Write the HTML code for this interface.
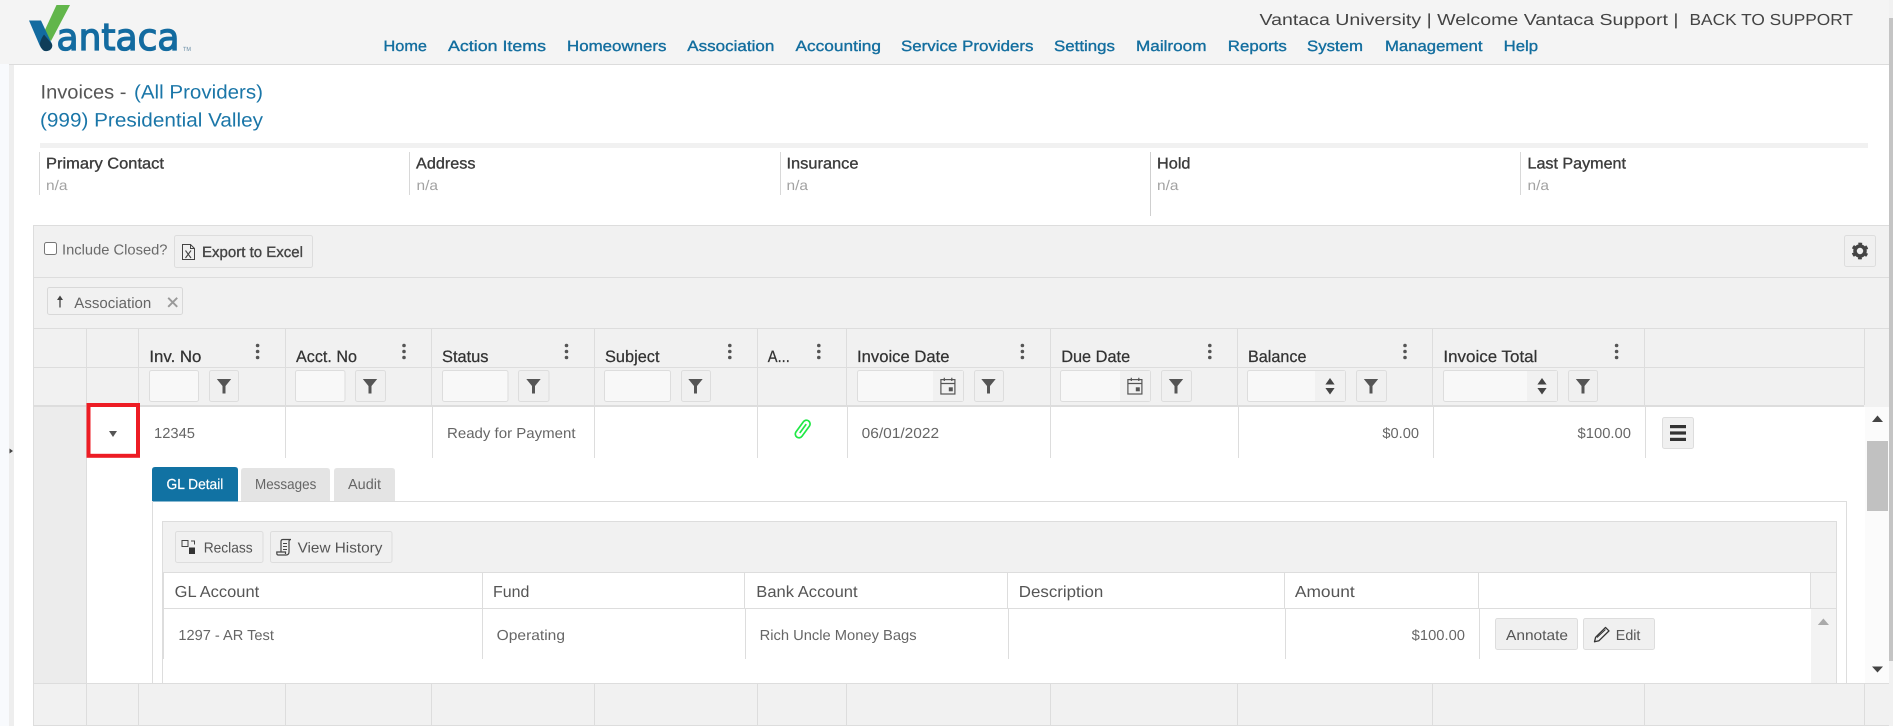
<!DOCTYPE html>
<html lang="en"><head><meta charset="utf-8"><title>Invoices</title>
<style>
html,body{margin:0;padding:0;background:#fff;overflow:hidden;width:1893px;height:726px}
svg{display:block}
text{font-family:"Liberation Sans",sans-serif;font-size:15px;fill:#666;text-rendering:geometricPrecision;white-space:pre}
.nav{font-size:15px;fill:#136e9f;stroke:#136e9f;stroke-width:.35px}
.top{font-size:16px;fill:#444}
.title{font-size:19.5px;fill:#555}
.link{font-size:19.5px;fill:#1a76a8}
.lab{font-size:15.5px;fill:#3c3c3c;stroke:#3c3c3c;stroke-width:.35px}
.na{font-size:14px;fill:#a2a2a2}
.th{font-size:16.5px;fill:#333;stroke:#333;stroke-width:.25px}
.td{font-size:14.5px;fill:#666}
.sh{font-size:16px;fill:#555}
.b{font-size:14.5px;fill:#555}
.l rect{fill:#ddd}
.btn{fill:#f0f0f0;stroke:#ddd;stroke-width:1}
.inp{fill:#f8f8f8;stroke:#ddd;stroke-width:1}
</style></head>
<body>
<svg xmlns="http://www.w3.org/2000/svg" width="1893" height="726" viewBox="0 0 1893 726">
<defs>
<g id="k" fill="#555"><circle cx="0" cy="345.5" r="1.8"/><circle cx="0" cy="351.5" r="1.8"/><circle cx="0" cy="357.5" r="1.8"/></g>
<path id="f" d="M-7.2 379H7.2L1.5 386V393.5H-1.5V386Z" fill="#555"/>
<g id="c" fill="none" stroke="#555" stroke-width="1.2"><rect x="0.6" y="379.6" width="14" height="14.4"/><path d="M0.6 383.5H14.6M4 377.8V381M11.5 377.8V381"/><rect x="8.5" y="387.3" width="4" height="4" fill="#555" stroke="none"/></g>
<path id="s" d="M0 378L4.600 384.500H-4.600ZM0 394.500L4.600 388H-4.600Z" fill="#444"/>
</defs>

<!-- page -->
<rect width="1893" height="726" fill="#fff"/>
<rect x="0" y="0" width="1889" height="64" fill="#f4f4f4"/>
<rect x="0" y="64" width="9" height="662" fill="#f8fafd"/>
<rect x="9" y="64" width="5" height="662" fill="#eeeeee"/>
<rect x="9" y="64" width="1880" height="1" fill="#dcdcdc"/>
<rect x="1889" y="0" width="4" height="726" fill="#f1f1f1"/>
<rect x="1889" y="18" width="4" height="643" fill="#c4c4c4"/>

<!-- logo -->
<path d="M56.500 5H70L51 41L44 32Z" fill="#62b64b"/>
<path d="M29 20.500H41L52 44Q53 48 49.500 50.300Q45 52.300 42.500 49.500Q40.500 47.500 39.500 45Z" fill="#136ba0"/>
<path d="M44 34.500L52 44Q53 48 49.500 50.300Q45 52.300 42.500 49.500Q39.500 46 40 43Q41 38.500 44 34.500Z" fill="#0f3d59"/>
<text x="56.500" y="50" textLength="123" lengthAdjust="spacingAndGlyphs" style="font-family:'DejaVu Sans',sans-serif;font-size:37px;fill:#136ba0;stroke:#136ba0;stroke-width:1.3px">antaca</text>
<text x="183" y="51" textLength="8" lengthAdjust="spacingAndGlyphs" style="font-size:6px;fill:#6a8ea6">TM</text>

<!-- top right -->
<text class="top" x="1259.500" y="25" textLength="419" lengthAdjust="spacingAndGlyphs">Vantaca University | Welcome Vantaca Support |</text>
<text class="top" x="1689.500" y="25" textLength="163.500" lengthAdjust="spacingAndGlyphs">BACK TO SUPPORT</text>

<!-- nav -->
<text class="nav" x="383.500" y="51" textLength="43.500" lengthAdjust="spacingAndGlyphs">Home</text>
<text class="nav" x="448" y="51" textLength="98" lengthAdjust="spacingAndGlyphs">Action Items</text>
<text class="nav" x="567" y="51" textLength="99.500" lengthAdjust="spacingAndGlyphs">Homeowners</text>
<text class="nav" x="687.300" y="51" textLength="87" lengthAdjust="spacingAndGlyphs">Association</text>
<text class="nav" x="795.500" y="51" textLength="85.500" lengthAdjust="spacingAndGlyphs">Accounting</text>
<text class="nav" x="901" y="51" textLength="132.500" lengthAdjust="spacingAndGlyphs">Service Providers</text>
<text class="nav" x="1054" y="51" textLength="61" lengthAdjust="spacingAndGlyphs">Settings</text>
<text class="nav" x="1136" y="51" textLength="70.500" lengthAdjust="spacingAndGlyphs">Mailroom</text>
<text class="nav" x="1227.800" y="51" textLength="59" lengthAdjust="spacingAndGlyphs">Reports</text>
<text class="nav" x="1307" y="51" textLength="56" lengthAdjust="spacingAndGlyphs">System</text>
<text class="nav" x="1385" y="51" textLength="97.500" lengthAdjust="spacingAndGlyphs">Management</text>
<text class="nav" x="1503.600" y="51" textLength="34.500" lengthAdjust="spacingAndGlyphs">Help</text>

<!-- title -->
<text class="title" x="40.500" y="98.500" textLength="86" lengthAdjust="spacingAndGlyphs">Invoices -</text>
<text class="link" x="134" y="98.500" textLength="129" lengthAdjust="spacingAndGlyphs">(All Providers)</text>
<text class="link" x="40" y="126.500" textLength="223" lengthAdjust="spacingAndGlyphs">(999) Presidential Valley</text>

<!-- info strip -->
<rect x="40" y="143" width="1828" height="5" fill="#f1f1f1"/>
<g fill="#d8d8d8">
<rect x="39" y="152" width="1" height="43"/><rect x="409" y="152" width="1" height="43"/><rect x="780" y="152" width="1" height="43"/><rect x="1150" y="152" width="1" height="64" fill="#cfcfcf"/><rect x="1520" y="152" width="1" height="43"/>
</g>
<text class="lab" x="46" y="168.500" textLength="118" lengthAdjust="spacingAndGlyphs">Primary Contact</text>
<text class="lab" x="416" y="168.500" textLength="59.500" lengthAdjust="spacingAndGlyphs">Address</text>
<text class="lab" x="786.500" y="168.500" textLength="72" lengthAdjust="spacingAndGlyphs">Insurance</text>
<text class="lab" x="1157" y="168.500" textLength="33.500" lengthAdjust="spacingAndGlyphs">Hold</text>
<text class="lab" x="1527.500" y="168.500" textLength="98.500" lengthAdjust="spacingAndGlyphs">Last Payment</text>
<text class="na" x="46" y="190" textLength="21.500" lengthAdjust="spacingAndGlyphs">n/a</text>
<text class="na" x="416.500" y="190" textLength="21.500" lengthAdjust="spacingAndGlyphs">n/a</text>
<text class="na" x="786.500" y="190" textLength="21.500" lengthAdjust="spacingAndGlyphs">n/a</text>
<text class="na" x="1157" y="190" textLength="21.500" lengthAdjust="spacingAndGlyphs">n/a</text>
<text class="na" x="1527.500" y="190" textLength="21.500" lengthAdjust="spacingAndGlyphs">n/a</text>

<!-- grid chrome -->
<rect x="33" y="225" width="1856" height="182" fill="#f1f1f1"/>
<rect x="33" y="407" width="53" height="276" fill="#ececec"/>
<rect x="33" y="683" width="1856" height="42" fill="#f1f1f1"/>
<rect x="1865" y="407" width="24" height="276" fill="#fbfbfb"/>
<rect x="1867" y="441" width="21" height="70" fill="#c1c1c1"/>
<path d="M1877.500 415.500L1883 422H1872Z" fill="#444"/>
<path d="M1872 666.500H1883L1877.500 672.500Z" fill="#444"/>

<g class="l">
<rect x="33" y="225" width="1" height="501"/>
<rect x="33" y="225" width="1856" height="1"/>
<rect x="33" y="277" width="1856" height="1"/>
<rect x="33" y="328" width="1856" height="1"/>
<rect x="33" y="367" width="1831" height="1"/>
<rect x="33" y="405" width="1831" height="2"/>
<rect x="33" y="683" width="1856" height="1"/>
<rect x="33" y="725" width="1856" height="1"/>
<!-- header dividers -->
<rect x="86" y="328" width="1" height="77"/><rect x="138" y="328" width="1" height="77"/><rect x="285" y="328" width="1" height="77"/><rect x="431" y="328" width="1" height="77"/><rect x="594" y="328" width="1" height="77"/><rect x="757" y="328" width="1" height="77"/><rect x="846" y="328" width="1" height="77"/><rect x="1050" y="328" width="1" height="77"/><rect x="1237" y="328" width="1" height="77"/><rect x="1432" y="328" width="1" height="77"/><rect x="1644" y="328" width="1" height="77"/><rect x="1864" y="328" width="1" height="77"/>
<!-- row dividers -->
<rect x="86" y="407" width="1" height="276"/>
<rect x="285" y="407" width="1" height="51"/><rect x="432" y="407" width="1" height="51"/><rect x="594" y="407" width="1" height="51"/><rect x="757" y="407" width="1" height="51"/><rect x="847" y="407" width="1" height="51"/><rect x="1050" y="407" width="1" height="51"/><rect x="1238" y="407" width="1" height="51"/><rect x="1433" y="407" width="1" height="51"/><rect x="1645" y="407" width="1" height="51"/>
<!-- footer dividers -->
<rect x="86" y="683" width="1" height="42"/><rect x="138" y="683" width="1" height="42"/><rect x="285" y="683" width="1" height="42"/><rect x="431" y="683" width="1" height="42"/><rect x="594" y="683" width="1" height="42"/><rect x="757" y="683" width="1" height="42"/><rect x="846" y="683" width="1" height="42"/><rect x="1050" y="683" width="1" height="42"/><rect x="1237" y="683" width="1" height="42"/><rect x="1432" y="683" width="1" height="42"/><rect x="1644" y="683" width="1" height="42"/><rect x="1864" y="683" width="1" height="42"/>
</g>

<!-- toolbar -->
<rect x="44.500" y="242.500" width="12" height="12" rx="2" fill="#fff" stroke="#767676"/>
<text class="td" x="62" y="254.500" textLength="105.500" lengthAdjust="spacingAndGlyphs" style="fill:#6a6a6a">Include Closed?</text>
<rect class="btn" x="174.500" y="235.500" width="138" height="32" rx="2"/>
<path d="M182.500 244.500H190.500L194.500 248.500V259.500H182.500ZM190.500 244.500V248.500H194.500" fill="none" stroke="#444" stroke-width="1"/>
<path d="M185.500 250.500L191 258M191 250.500L185.500 258" stroke="#444" stroke-width="1.1" fill="none"/>
<text class="lab" x="202" y="257" textLength="101" lengthAdjust="spacingAndGlyphs" style="fill:#444;stroke:#444;font-size:15px">Export to Excel</text>
<rect class="btn" x="1844.500" y="235.500" width="31" height="31" rx="2"/>
<circle cx="1860" cy="251" r="5" fill="none" stroke="#444" stroke-width="3.600"/>
<circle cx="1860" cy="251" r="7" fill="none" stroke="#444" stroke-width="2.800" stroke-dasharray="3.500 3.830" stroke-dashoffset="1.750" transform="rotate(30 1860 251)"/>

<!-- group chip -->
<rect x="47.500" y="287.500" width="135" height="27" rx="2" fill="#f1f1f1" stroke="#d8d8d8"/>
<path d="M60 307.500V298" stroke="#444" stroke-width="1.300"/><path d="M60 295.500L63 300H57Z" fill="#444"/>
<text class="td" x="74.300" y="308" textLength="77" lengthAdjust="spacingAndGlyphs" style="font-size:15px">Association</text>
<path d="M168.200 297.800L177.200 306.800M177.200 297.800L168.200 306.800" stroke="#999" stroke-width="1.900"/>

<!-- header labels -->
<text class="th" x="149.400" y="362" textLength="52" lengthAdjust="spacingAndGlyphs">Inv. No</text>
<text class="th" x="296" y="362" textLength="61" lengthAdjust="spacingAndGlyphs">Acct. No</text>
<text class="th" x="442" y="362" textLength="46.500" lengthAdjust="spacingAndGlyphs">Status</text>
<text class="th" x="605" y="362" textLength="54.500" lengthAdjust="spacingAndGlyphs">Subject</text>
<text class="th" x="767.800" y="362" textLength="22" lengthAdjust="spacingAndGlyphs">A...</text>
<text class="th" x="857" y="362" textLength="92.500" lengthAdjust="spacingAndGlyphs">Invoice Date</text>
<text class="th" x="1061.200" y="362" textLength="69" lengthAdjust="spacingAndGlyphs">Due Date</text>
<text class="th" x="1248" y="362" textLength="58.500" lengthAdjust="spacingAndGlyphs">Balance</text>
<text class="th" x="1443.400" y="362" textLength="94" lengthAdjust="spacingAndGlyphs">Invoice Total</text>

<use href="#k" x="257.600"/><use href="#k" x="404"/><use href="#k" x="566.500"/><use href="#k" x="729.800"/><use href="#k" x="818.800"/><use href="#k" x="1022.400"/><use href="#k" x="1209.800"/><use href="#k" x="1405"/><use href="#k" x="1616.600"/>

<!-- filter row -->
<rect class="inp" x="149.500" y="370.500" width="49" height="31" rx="2"/>
<rect class="btn" x="209.500" y="370.500" width="29" height="31" rx="2"/><use href="#f" x="224"/>
<rect class="inp" x="295.500" y="370.500" width="49.500" height="31" rx="2"/>
<rect class="btn" x="355.500" y="370.500" width="30" height="31" rx="2"/><use href="#f" x="370"/>
<rect class="inp" x="442.500" y="370.500" width="65.500" height="31" rx="2"/>
<rect class="btn" x="518.500" y="370.500" width="30.500" height="31" rx="2"/><use href="#f" x="533.500"/>
<rect class="inp" x="604.500" y="370.500" width="66" height="31" rx="2"/>
<rect class="btn" x="681.500" y="370.500" width="29" height="31" rx="2"/><use href="#f" x="695.500"/>

<rect class="inp" x="857.500" y="370.500" width="106" height="31" rx="2"/>
<rect x="933" y="371" width="30" height="30" fill="#f1f1f1"/>
<use href="#c" x="940.300"/>
<rect class="btn" x="974.500" y="370.500" width="29" height="31" rx="2"/><use href="#f" x="988.500"/>
<rect class="inp" x="1060.500" y="370.500" width="90" height="31" rx="2"/>
<rect x="1120" y="371" width="30" height="30" fill="#f1f1f1"/>
<use href="#c" x="1127.300"/>
<rect class="btn" x="1161.500" y="370.500" width="30" height="31" rx="2"/><use href="#f" x="1176"/>
<rect class="inp" x="1247.500" y="370.500" width="98" height="31" rx="2"/>
<rect x="1315" y="371" width="30" height="30" fill="#f1f1f1"/>
<use href="#s" x="1330"/>
<rect class="btn" x="1356.500" y="370.500" width="30" height="31" rx="2"/><use href="#f" x="1371"/>
<rect class="inp" x="1443.500" y="370.500" width="114" height="31" rx="2"/>
<rect x="1527" y="371" width="30" height="30" fill="#f1f1f1"/>
<use href="#s" x="1542"/>
<rect class="btn" x="1568.500" y="370.500" width="29" height="31" rx="2"/><use href="#f" x="1583"/>

<!-- red box -->
<rect x="88.500" y="405" width="49.500" height="50.800" fill="#fff" stroke="#ed1c24" stroke-width="4"/>
<path d="M109 431H117L113 437Z" fill="#555"/>
<path d="M9.500 448.500L13 451L9.500 453.500Z" fill="#444"/>

<!-- data row -->
<text class="td" x="154" y="438" textLength="41" lengthAdjust="spacingAndGlyphs">12345</text>
<text class="td" x="447" y="438" textLength="128.500" lengthAdjust="spacingAndGlyphs">Ready for Payment</text>
<g transform="rotate(36 802.700 429)" fill="none" stroke="#1fe845" stroke-width="1.700">
<rect x="799" y="419" width="7.400" height="20" rx="3.700"/>
<path d="M802.700 423V434"/>
</g>
<text class="td" x="861.600" y="438" textLength="77.500" lengthAdjust="spacingAndGlyphs">06/01/2022</text>
<text class="td" x="1382.400" y="438" textLength="36.600" lengthAdjust="spacingAndGlyphs">$0.00</text>
<text class="td" x="1577.500" y="438" textLength="53.500" lengthAdjust="spacingAndGlyphs">$100.00</text>
<rect class="btn" x="1662.500" y="417.500" width="31" height="31" rx="2"/>
<g fill="#333"><rect x="1670" y="425" width="16" height="3.200"/><rect x="1670" y="431.400" width="16" height="3.200"/><rect x="1670" y="437.800" width="16" height="3.200"/></g>

<!-- tabs -->
<path d="M152 501.500V470Q152 467 155 467H235Q238 467 238 470V501.500Z" fill="#1172a3"/>
<path d="M241 501V471Q241 468 244 468H327Q330 468 330 471V501Z" fill="#e4e4e4"/>
<path d="M334 501V471Q334 468 337 468H392Q395 468 395 471V501Z" fill="#e4e4e4"/>
<text class="td" x="166.500" y="489" textLength="56.800" lengthAdjust="spacingAndGlyphs" style="fill:#fff;stroke:#fff;stroke-width:.2px">GL Detail</text>
<text class="td" x="255" y="489" textLength="61.300" lengthAdjust="spacingAndGlyphs">Messages</text>
<text class="td" x="348" y="489" textLength="33" lengthAdjust="spacingAndGlyphs">Audit</text>

<g class="l">
<rect x="238" y="501" width="1609" height="1"/>
<rect x="152" y="501" width="1" height="182"/>
<rect x="1846" y="501" width="1" height="182"/>
</g>

<!-- inner grid -->
<rect x="162" y="521" width="1675" height="52" fill="#f1f1f1"/>
<rect x="1811" y="573" width="25" height="110" fill="#f3f3f3"/>
<g class="l">
<rect x="162" y="521" width="1675" height="1"/>
<rect x="162" y="521" width="1" height="162"/>
<rect x="1836" y="521" width="1" height="162"/>
<rect x="162" y="572" width="1675" height="1"/>
<rect x="163" y="608" width="1674" height="1"/>
<rect x="163" y="573" width="1" height="86"/>
<rect x="482" y="573" width="1" height="35"/><rect x="744" y="573" width="1" height="35"/><rect x="1007" y="573" width="1" height="35"/><rect x="1284" y="573" width="1" height="35"/><rect x="1478" y="573" width="1" height="35"/><rect x="1810" y="573" width="1" height="35"/>
<rect x="482" y="609" width="1" height="50"/><rect x="745" y="609" width="1" height="50"/><rect x="1008" y="609" width="1" height="50"/><rect x="1285" y="609" width="1" height="50"/><rect x="1479" y="609" width="1" height="50"/>
</g>

<rect class="btn" x="175.500" y="531.500" width="87.500" height="31" rx="2"/>
<rect x="182" y="540.500" width="6" height="6" fill="none" stroke="#444"/>
<rect x="189" y="547.500" width="6" height="6.500" fill="#333"/>
<path d="M191 541H194.500V544.500" fill="none" stroke="#444"/>
<text class="b" x="203.700" y="552.500" textLength="49" lengthAdjust="spacingAndGlyphs">Reclass</text>
<rect class="btn" x="270.500" y="531.500" width="121.500" height="31" rx="2"/>
<path d="M281 552V541.500Q281 539.500 283 539.500H291M291 539.500Q289 539.500 289 541.500V552Q289 555 286 555H278Q276.800 555 276.800 553V552H285.500V554" fill="none" stroke="#444" stroke-width="1.200"/>
<path d="M283 543.500H287M283 546.500H287M283 549.500H287" stroke="#444" stroke-width="1"/>
<text class="b" x="297.600" y="552.500" textLength="84.800" lengthAdjust="spacingAndGlyphs">View History</text>

<text class="sh" x="174.700" y="597" textLength="84.500" lengthAdjust="spacingAndGlyphs">GL Account</text>
<text class="sh" x="493" y="597" textLength="36.400" lengthAdjust="spacingAndGlyphs">Fund</text>
<text class="sh" x="756.300" y="597" textLength="101.300" lengthAdjust="spacingAndGlyphs">Bank Account</text>
<text class="sh" x="1018.800" y="597" textLength="84.500" lengthAdjust="spacingAndGlyphs">Description</text>
<text class="sh" x="1294.900" y="597" textLength="59.800" lengthAdjust="spacingAndGlyphs">Amount</text>

<text class="td" x="178.400" y="640" textLength="95.500" lengthAdjust="spacingAndGlyphs">1297 - AR Test</text>
<text class="td" x="496.700" y="640" textLength="68.300" lengthAdjust="spacingAndGlyphs">Operating</text>
<text class="td" x="759.600" y="640" textLength="157" lengthAdjust="spacingAndGlyphs">Rich Uncle Money Bags</text>
<text class="td" x="1411.700" y="640" textLength="53.300" lengthAdjust="spacingAndGlyphs">$100.00</text>

<rect class="btn" x="1495.500" y="618.500" width="82" height="31" rx="2"/>
<text class="b" x="1506" y="640" textLength="62" lengthAdjust="spacingAndGlyphs">Annotate</text>
<rect class="btn" x="1583.500" y="618.500" width="71" height="31" rx="2"/>
<path d="M1594.500 641.800L1595.600 637.300L1605.500 627.400L1609 630.900L1599 640.700Z" fill="none" stroke="#333" stroke-width="1.300" stroke-linejoin="round"/>
<path d="M1597 637.500L1605.500 629.500" stroke="#333" stroke-width="1"/>
<text class="b" x="1615.800" y="640" textLength="24.600" lengthAdjust="spacingAndGlyphs">Edit</text>

<path d="M1823.400 618.500L1829 625H1817.800Z" fill="#aaa"/>
</svg>
</body></html>
